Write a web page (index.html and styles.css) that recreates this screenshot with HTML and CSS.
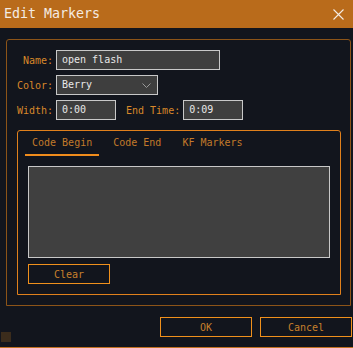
FILE: index.html
```html
<!DOCTYPE html>
<html lang="en">
<head>
    <meta charset="UTF-8">
    <title>Edit Markers</title>
    <link rel="stylesheet" href="styles.css">
</head>
<body>

<div class="window">
    <div class="titlebar">
        <span class="title">Edit Markers</span>
        <svg class="close" width="11" height="11" viewBox="0 0 11 11">
            <path d="M0.5 0.5 L10.5 10.5 M10.5 0.5 L0.5 10.5" stroke="#f4ece4" stroke-width="1.1" fill="none"/>
        </svg>
    </div>

    <div class="outer-group">
        <div class="row">
            <label class="lbl">Name:</label>
            <div class="field name-field">open flash</div>
        </div>
        <div class="row">
            <label class="lbl">Color:</label>
            <div class="field select-field">
                <span>Berry</span>
                <svg width="9" height="5" viewBox="0 0 9 5">
                    <path d="M0.5 0.5 L4.5 4.5 L8.5 0.5" stroke="#9a9a9a" stroke-width="1" fill="none"/>
                </svg>
            </div>
        </div>
        <div class="row">
            <label class="lbl">Width:</label>
            <div class="field time-field">0:00</div>
            <label class="lbl-inline">End Time:</label>
            <div class="field time-field">0:09</div>
        </div>

        <div class="inner-group">
            <div class="tabs">
                <div class="tab active">Code Begin</div>
                <div class="tab">Code End</div>
                <div class="tab">KF Markers</div>
            </div>
            <div class="code-area"></div>
            <button class="btn clear-btn">Clear</button>
        </div>
    </div>

    <div class="footer">
        <div class="grip"></div>
        <button class="btn dlg-btn">OK</button>
        <button class="btn dlg-btn">Cancel</button>
    </div>

    <div class="statusline"></div>
</div>

</body>
</html>
```

FILE: styles.css
```css
* {
    margin: 0;
    padding: 0;
    box-sizing: border-box;
    font-family: "DejaVu Sans Mono", monospace;
}

body {
    background-color: #12151d;
    width: 353px;
    height: 348px;
    overflow: hidden;
}

.window {
    height: 348px;
    display: flex;
    flex-direction: column;
}

.titlebar {
    height: 28px;
    background-color: #b96b1b;
    display: flex;
    align-items: center;
    padding: 0 9px 0 4px;
}

.title {
    flex: 1;
    color: #f4ece4;
    font-size: 13.3px;
    line-height: 14px;
}

.close {
    display: block;
}

.outer-group {
    margin: 11px 2px 0 6px;
    height: 267px;
    border: 1px solid #8c5418;
    border-radius: 3px 3px 0 0;
    padding: 10px 9px 0 0;
    display: flex;
    flex-direction: column;
    gap: 5px;
}

.row {
    display: flex;
    align-items: center;
    height: 20px;
}

.lbl {
    width: 46px;
    text-align: right;
    color: #d9882a;
    font-size: 10px;
    margin-right: 3px;
}

.lbl-inline {
    color: #d9882a;
    font-size: 10px;
    margin: 0 3px 0 10px;
}

.field {
    height: 20px;
    background-color: #3e3e3e;
    border: 1px solid #c8c8c8;
    color: #e8e8e8;
    font-size: 10px;
    line-height: 18px;
    padding-left: 5px;
}

.name-field {
    width: 164px;
}

.select-field {
    width: 102px;
    display: flex;
    align-items: center;
    justify-content: space-between;
    padding-right: 6px;
}

.select-field svg {
    display: block;
}

.time-field {
    width: 60px;
}

.inner-group {
    margin: 5px 0 10px 10px;
    flex: 1;
    border: 1px solid #e0801c;
    border-radius: 3px 3px 0 0;
    padding: 5px 10px 0 10px;
    display: flex;
    flex-direction: column;
    align-items: flex-start;
}

.tabs {
    display: flex;
    gap: 7px;
    margin-left: -3px;
}

.tab {
    color: #c27a2a;
    font-size: 10px;
    line-height: 12px;
    padding: 1px 7px 5px 7px;
    border-bottom: 2px solid transparent;
}

.tab.active {
    border-bottom-color: #f08c1c;
}

.code-area {
    margin-top: 10px;
    width: 302px;
    height: 92px;
    background-color: #404040;
    border: 1px solid #c8c8c8;
}

.btn {
    height: 20px;
    background-color: transparent;
    border: 1px solid #f0901c;
    color: #c8802c;
    font-size: 10px;
    cursor: pointer;
}

.clear-btn {
    margin-top: 6px;
    width: 82px;
}

.footer {
    margin-top: 11px;
    height: 25px;
    display: flex;
    align-items: flex-start;
    gap: 8px;
    padding: 0 1px 0 1px;
}

.grip {
    align-self: flex-end;
    width: 10px;
    height: 10px;
    background-color: #3b2c1c;
    margin-right: auto;
}

.dlg-btn {
    width: 92px;
}

.statusline {
    margin-top: auto;
    height: 1px;
    background-color: #c07020;
}
```
